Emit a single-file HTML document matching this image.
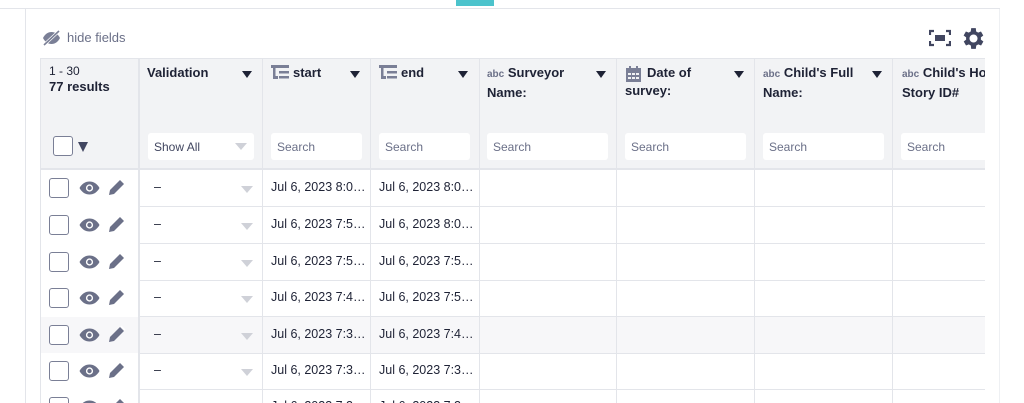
<!DOCTYPE html><html><head><style>
*{box-sizing:border-box;margin:0;padding:0}
html,body{width:1024px;height:403px;overflow:hidden}
body{background:#fff;font-family:"Liberation Sans",Arial,sans-serif;position:relative;color:#1e2235}
.a{position:absolute}
.h{font-weight:bold;font-size:13px;color:#1e2235;line-height:18px}
.s{position:absolute;top:133px;height:27px;background:#fff;border-radius:3px;font-size:12px;color:#6b7088;padding:7px 6px}
.vl{position:absolute;width:1px;background:#e3e5ea}
.hl{position:absolute;height:1px;background:#e3e5ea;left:139px;width:846px}
.car{position:absolute;width:0;height:0;border-left:5px solid transparent;border-right:5px solid transparent;border-top:7px solid #1e2235}
.cb{position:absolute;left:49px;width:20px;height:20px;border:1.5px solid #7a7f96;border-radius:3px;background:#fff}
.d{position:absolute;font-size:12.5px;color:#1e2235}
.gc{position:absolute;width:0;height:0;border-left:6px solid transparent;border-right:6px solid transparent;border-top:7px solid #cfd1d8}
.abc{font-size:10px;color:#6b7088;font-weight:bold}
</style></head><body>
<div class="a" style="left:0;top:8px;width:1000px;height:1px;background:#e3e5ea"></div>
<div class="a" style="left:456px;top:0;width:38px;height:6px;background:#4cc3cc"></div>
<div class="a" style="left:25px;top:9px;width:1px;height:394px;background:#e3e5ea"></div>
<div class="a" style="left:999px;top:9px;width:1px;height:394px;background:#eef0f3"></div>
<svg class="a" style="left:41px;top:30px" width="21" height="16" viewBox="0 0 21 16"><path d="M2 8c2-4 5-6 8.5-6s6.5 2 8.5 6c-2 4-5 6-8.5 6S4 12 2 8z" fill="#7a7f96"/><path d="M3 15L18 1" stroke="#fff" stroke-width="3"/><path d="M3 15L18 1" stroke="#7a7f96" stroke-width="1.6"/></svg>
<div class="a" style="left:67px;top:30px;font-size:13px;color:#6b7088">hide fields</div>
<svg class="a" style="left:929px;top:29px" width="22" height="18" viewBox="0 0 22 18"><path d="M1 6V2h4M17 2h4v4M21 12v4h-4M5 16H1v-4" stroke="#414660" stroke-width="2.2" fill="none"/><rect x="6" y="6" width="10" height="6" fill="#414660"/></svg>
<svg class="a" style="left:962px;top:27px" width="23" height="23" viewBox="2 2 20 20"><path fill="#414660" d="M19.4 13a7.5 7.5 0 000-2l2.1-1.6-2-3.5-2.5 1a7 7 0 00-1.7-1L15 3h-4l-.4 2.9a7 7 0 00-1.7 1l-2.5-1-2 3.5L6.6 11a7.5 7.5 0 000 2l-2.1 1.6 2 3.5 2.5-1a7 7 0 001.7 1L11 21h4l.4-2.9a7 7 0 001.7-1l2.5 1 2-3.5zM13 15.5a3.5 3.5 0 110-7 3.5 3.5 0 010 7z" transform="translate(-1 0)"/></svg>
<!-- header -->
<div class="a" style="left:40px;top:58px;width:945px;height:112px;background:#f2f3f5;border-top:1px solid #e3e5ea;border-bottom:2px solid #e3e5ea"></div>
<div class="a" style="left:41px;top:317px;width:944px;height:36px;background:#f7f7f9"></div>
<div class="a" style="left:40px;top:58px;width:1px;height:345px;background:#e3e5ea"></div>
<div class="a" style="left:138px;top:58px;width:2px;height:345px;background:#e3e5ea"></div>
<div class="vl" style="left:262px;top:58px;height:345px"></div>
<div class="vl" style="left:370px;top:58px;height:345px"></div>
<div class="vl" style="left:479px;top:58px;height:345px"></div>
<div class="vl" style="left:616px;top:58px;height:345px"></div>
<div class="vl" style="left:754px;top:58px;height:345px"></div>
<div class="vl" style="left:892px;top:58px;height:345px"></div>
<div class="a" style="left:49px;top:64px;font-size:12px;line-height:15px">1 - 30<br><b style="font-size:13px">77 results</b></div>
<div class="cb" style="top:136px;left:53px"></div>
<div class="car" style="left:78px;top:142px;border-top-width:10px;border-left-width:5px;border-right-width:5px;border-top-color:#414660"></div>
<div class="a h" style="left:147px;top:64px">Validation</div><div class="car" style="left:242px;top:71px"></div>
<div class="s" style="left:148px;top:133px;width:106px;color:#414660">Show All</div><div class="gc" style="left:235px;top:143px"></div>
<svg class="a" style="left:271px;top:65px" width="18" height="16" viewBox="0 0 18 16"><rect x="0" y="0" width="18" height="3" fill="#7a7f96"/><rect x="2" y="3" width="2.5" height="11" fill="#7a7f96"/><rect x="2" y="11" width="5" height="3" fill="#7a7f96"/><rect x="8" y="6" width="10" height="2.5" fill="#7a7f96"/><rect x="8" y="11" width="10" height="2.5" fill="#7a7f96"/></svg>
<div class="a h" style="left:293px;top:64px">start</div><div class="car" style="left:350px;top:71px"></div>
<div class="s" style="left:271px;width:91px">Search</div>
<svg class="a" style="left:379px;top:65px" width="18" height="16" viewBox="0 0 18 16"><rect x="0" y="0" width="18" height="3" fill="#7a7f96"/><rect x="2" y="3" width="2.5" height="11" fill="#7a7f96"/><rect x="2" y="11" width="5" height="3" fill="#7a7f96"/><rect x="8" y="6" width="10" height="2.5" fill="#7a7f96"/><rect x="8" y="11" width="10" height="2.5" fill="#7a7f96"/></svg>
<div class="a h" style="left:401px;top:64px">end</div><div class="car" style="left:458px;top:71px"></div>
<div class="s" style="left:379px;width:91px">Search</div>
<div class="a h" style="left:487px;top:64px;width:115px"><span class="abc">abc</span> Surveyor Name:</div><div class="car" style="left:596px;top:71px"></div>
<div class="s" style="left:487px;width:121px">Search</div>
<svg class="a" style="left:626px;top:66px" width="15" height="16" viewBox="0 0 15 16"><rect x="3" y="0" width="2" height="3" fill="#7a7f96"/><rect x="10" y="0" width="2" height="3" fill="#7a7f96"/><rect x="0" y="2" width="15" height="14" fill="#7a7f96"/><g fill="#f2f3f5"><rect x="2" y="7" width="3" height="2"/><rect x="6" y="7" width="3" height="2"/><rect x="10" y="7" width="3" height="2"/><rect x="2" y="11" width="3" height="2"/><rect x="6" y="11" width="3" height="2"/><rect x="10" y="11" width="3" height="2"/></g></svg>
<div class="a h" style="left:625px;top:64px;width:110px;text-indent:22px">Date of survey:</div><div class="car" style="left:734px;top:71px"></div>
<div class="s" style="left:625px;width:121px">Search</div>
<div class="a h" style="left:763px;top:64px;width:115px"><span class="abc">abc</span> Child's Full Name:</div><div class="car" style="left:872px;top:71px"></div>
<div class="s" style="left:763px;width:121px">Search</div>
<div class="a h" style="left:902px;top:64px;width:83px;overflow:hidden;white-space:nowrap"><span class="abc">abc</span> Child's Ho<br>Story ID#</div>
<div class="s" style="left:901px;width:84px;border-radius:3px 0 0 3px">Search</div>
<!-- rows -->
<div class="hl" style="top:206px"></div><div class="hl" style="top:243px"></div><div class="hl" style="top:280px"></div><div class="hl" style="top:316px"></div><div class="hl" style="top:353px"></div><div class="hl" style="top:389px"></div>
<div id="rows"></div>
<script>
var t=[["8:0","8:0"],["7:5","8:0"],["7:5","7:5"],["7:4","7:5"],["7:3","7:4"],["7:3","7:3"],["7:2","7:2"]];
var y=[188,225,262,298,335,371,407];var h="";
for(var i=0;i<7;i++){var c=y[i];
h+='<div class="cb" style="top:'+(c-10)+'px"></div>';
h+='<svg class="a" style="left:79px;top:'+(c-7)+'px" width="21" height="14" viewBox="0 0 21 14"><path d="M0.5 7C3 2.5 6.5 0.5 10.5 0.5S18 2.5 20.5 7C18 11.5 14.5 13.5 10.5 13.5S3 11.5 0.5 7z" fill="#6b7088"/><circle cx="10.5" cy="7" r="3.6" fill="#fff"/><circle cx="10.5" cy="7" r="2.2" fill="#6b7088"/></svg>';
h+='<svg class="a" style="left:108px;top:'+(c-10)+'px" width="18" height="18" viewBox="0 0 18 18"><path d="M1 17l1-5L12 2l4 4L6 16z" fill="#6b7088"/><path d="M13 1l4 4" stroke="#fff" stroke-width="1.3"/></svg>';
h+='<div class="d" style="left:154px;top:'+(c-8)+'px">–</div><div class="gc" style="left:241px;top:'+(c-2)+'px"></div>';
h+='<div class="d" style="left:271px;top:'+(c-8)+'px">Jul 6, 2023 '+t[i][0]+'…</div>';
h+='<div class="d" style="left:379px;top:'+(c-8)+'px">Jul 6, 2023 '+t[i][1]+'…</div>';}
document.getElementById("rows").innerHTML=h;
</script>
</body></html>
